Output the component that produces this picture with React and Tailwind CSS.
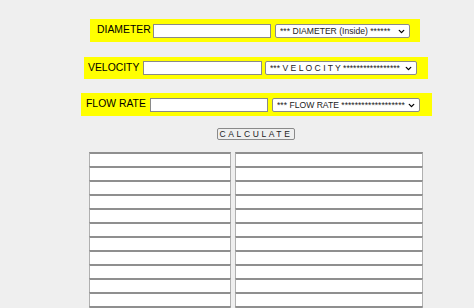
import { ChevronDown } from "lucide-react";

const font = { fontFamily: '"Liberation Sans", Arial, sans-serif' };

function Field({ label, boxClass, labelClass, inputClass, selectClass, option }) {
  return (
    <div className={`flex items-center bg-[#ffff00] ${boxClass}`}>
      <span className={`text-[10.4px] leading-none text-black ${labelClass}`}>{label}</span>
      <input
        type="text"
        className={`block h-[14px] border border-[#8a8a8a] bg-white outline-none ${inputClass}`}
      />
      <div className={`relative h-[14px] ${selectClass}`}>
        <select className="block h-[14px] w-full appearance-none rounded-[2px] border border-[#8a8a8a] bg-white py-0 pl-[4px] text-[8.6px] leading-[12px] text-[#222] outline-none">
          <option>{option}</option>
        </select>
        <ChevronDown
          className="pointer-events-none absolute right-[4px] top-[3px] h-[9px] w-[9px] text-black"
          strokeWidth={3.5}
        />
      </div>
    </div>
  );
}

export default function App() {
  const rows = Array.from({ length: 12 });
  return (
    <div className="h-[308px] w-[474px] overflow-hidden bg-[#efefef]" style={font}>
      <div className="pt-[19px]">
        <Field
          label="DIAMETER"
          boxClass="ml-[90px] h-[23px] w-[330px] pl-[7px]"
          labelClass="w-[56px]"
          inputClass="w-[118px]"
          selectClass="ml-[4px] w-[135px]"
          option="*** DIAMETER (Inside) ******"
        />
        <Field
          label="VELOCITY"
          boxClass="mt-[15px] ml-[84px] h-[22px] w-[344px] pl-[4px]"
          labelClass="w-[55px]"
          inputClass="w-[119px]"
          selectClass="ml-[3px] w-[152px]"
          option="*** V E L O C I T Y *****************"
        />
        <Field
          label="FLOW RATE"
          boxClass="mt-[14px] ml-[81px] h-[23px] w-[351px] pl-[5px]"
          labelClass="w-[64px]"
          inputClass="w-[118px]"
          selectClass="ml-[4px] w-[148px]"
          option="*** FLOW RATE *******************"
        />
        <div className="mt-[12px] flex">
          <button className="ml-[217px] h-[12px] w-[78px] rounded-[2px] border border-[#8a8a8a] bg-[#efefef] text-[8.5px] leading-none tracking-[2.6px] text-[#222]">
            CALCULATE
          </button>
        </div>
        <div className="mt-[12px] ml-[89px] flex gap-[4px]">
          <div className="flex w-[142px] flex-col">
            {rows.map((_, i) => (
              <div
                key={i}
                className="h-[14px] border-x border-t-2 border-x-[#b0b0b0] border-t-[#8f8f8f] bg-white"
              />
            ))}
          </div>
          <div className="flex w-[188px] flex-col">
            {rows.map((_, i) => (
              <div
                key={i}
                className="h-[14px] border-x border-t-2 border-x-[#b0b0b0] border-t-[#8f8f8f] bg-white"
              />
            ))}
          </div>
        </div>
      </div>
    </div>
  );
}
